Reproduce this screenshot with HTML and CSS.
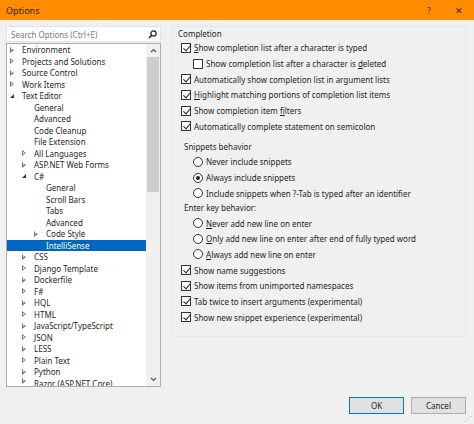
FILE: index.html
```html
<!DOCTYPE html>
<html lang="en">
<head>
    <meta charset="UTF-8">
    <title>Options</title>
    <link rel="stylesheet" href="styles.css">
</head>
<body>
<div class="window">
    <div class="titlebar">
        <span class="title">Options</span>
        <span class="title-btn">?</span>
        <span class="title-btn close">&#x2715;</span>
    </div>
    <div class="main">
        <div class="left">
            <div class="search">
                <span class="search-text">Search Options (Ctrl+E)</span>
                <svg class="search-icon" width="9" height="9" viewBox="0 0 9 9"><circle cx="5.5" cy="3.5" r="2.6" fill="none" stroke="#222" stroke-width="1.2"/><line x1="3.6" y1="5.4" x2="1" y2="8" stroke="#222" stroke-width="1.5"/></svg>
            </div>
            <div class="tree">
                <div class="tree-items">
                    <div class="row lv0"><span class="arr closed"></span>Environment</div>
                    <div class="row lv0"><span class="arr closed"></span>Projects and Solutions</div>
                    <div class="row lv0"><span class="arr closed"></span>Source Control</div>
                    <div class="row lv0"><span class="arr closed"></span>Work Items</div>
                    <div class="row lv0"><span class="arr open"></span>Text Editor</div>
                    <div class="row lv1"><span class="arr"></span>General</div>
                    <div class="row lv1"><span class="arr"></span>Advanced</div>
                    <div class="row lv1"><span class="arr"></span>Code Cleanup</div>
                    <div class="row lv1"><span class="arr"></span>File Extension</div>
                    <div class="row lv1"><span class="arr closed"></span>All Languages</div>
                    <div class="row lv1"><span class="arr closed"></span>ASP.NET Web Forms</div>
                    <div class="row lv1"><span class="arr open"></span>C#</div>
                    <div class="row lv2"><span class="arr"></span>General</div>
                    <div class="row lv2"><span class="arr"></span>Scroll Bars</div>
                    <div class="row lv2"><span class="arr"></span>Tabs</div>
                    <div class="row lv2"><span class="arr"></span>Advanced</div>
                    <div class="row lv2"><span class="arr closed"></span>Code Style</div>
                    <div class="row lv2 selected"><span class="arr"></span>IntelliSense</div>
                    <div class="row lv1"><span class="arr closed"></span>CSS</div>
                    <div class="row lv1"><span class="arr closed"></span>Django Template</div>
                    <div class="row lv1"><span class="arr closed"></span>Dockerfile</div>
                    <div class="row lv1"><span class="arr closed"></span>F#</div>
                    <div class="row lv1"><span class="arr closed"></span>HQL</div>
                    <div class="row lv1"><span class="arr closed"></span>HTML</div>
                    <div class="row lv1"><span class="arr closed"></span>JavaScript/TypeScript</div>
                    <div class="row lv1"><span class="arr closed"></span>JSON</div>
                    <div class="row lv1"><span class="arr closed"></span>LESS</div>
                    <div class="row lv1"><span class="arr closed"></span>Plain Text</div>
                    <div class="row lv1"><span class="arr closed"></span>Python</div>
                    <div class="row lv1 last"><span class="arr closed"></span>Razor (ASP.NET Core)</div>
                </div>
                <div class="scrollbar">
                    <svg class="sb-arrow" width="7" height="5" viewBox="0 0 7 5"><polyline points="1,4 3.5,1.5 6,4" fill="none" stroke="#555" stroke-width="1.2"/></svg>
                    <div class="sb-track"><div class="sb-thumb"></div></div>
                    <svg class="sb-arrow" width="7" height="5" viewBox="0 0 7 5"><polyline points="1,1 3.5,3.5 6,1" fill="none" stroke="#555" stroke-width="1.2"/></svg>
                </div>
            </div>
        </div>
        <div class="right">
            <div class="panel">
                <div class="heading">Completion</div>
                <label class="opt"><span class="cb on"></span><span><u>S</u>how completion list after a character is typed</span></label>
                <label class="opt sub"><span class="cb"></span><span>Show completion list after a character is <u>d</u>eleted</span></label>
                <label class="opt"><span class="cb on"></span><span>Automatically show completion list in argument lists</span></label>
                <label class="opt"><span class="cb on"></span><span><u>H</u>ighlight matching portions of completion list items</span></label>
                <label class="opt"><span class="cb on"></span><span>Show completion item <u>f</u>ilters</span></label>
                <label class="opt"><span class="cb on"></span><span>Automatically complete statement on semicolon</span></label>

                <div class="group-title">Snippets behavior</div>
                <label class="opt radio"><span class="rb"></span><span>Never include snippets</span></label>
                <label class="opt radio"><span class="rb on"></span><span>Always include snippets</span></label>
                <label class="opt radio"><span class="rb"></span><span>Include snippets when ?-Tab is typed after an identifier</span></label>

                <div class="group-title tight">Enter key behavior:</div>
                <label class="opt radio"><span class="rb"></span><span><u>N</u>ever add new line on enter</span></label>
                <label class="opt radio"><span class="rb"></span><span><u>O</u>nly add new line on enter after end of fully typed word</span></label>
                <label class="opt radio"><span class="rb"></span><span><u>A</u>lways add new line on enter</span></label>

                <label class="opt"><span class="cb on"></span><span>Show name su<u>g</u>gestions</span></label>
                <label class="opt"><span class="cb on"></span><span>Show items from unimported namespaces</span></label>
                <label class="opt"><span class="cb on"></span><span>Tab twice to insert arguments (experimental)</span></label>
                <label class="opt"><span class="cb on"></span><span>Show new snippet experience (experimental)</span></label>
            </div>
        </div>
    </div>
    <div class="footer">
        <button class="btn default">OK</button>
        <button class="btn">Cancel</button>
        <span class="grip">&#x22F0;</span>
    </div>
</div>
</body>
</html>
```

FILE: styles.css
```css
*{
    box-sizing: border-box;
}
body{
    margin: 0;
    background-color: #f0f0f0;
    font-family: "Noto Sans", sans-serif;
    font-size: 8px;
    color: #1e1e1e;
}
.window{
    width: 474px;
    height: 424px;
    display: flex;
    flex-direction: column;
    position: relative;
}
.titlebar{
    height: 20px;
    background-color: #ff8c00;
    display: flex;
    align-items: center;
    padding-left: 6px;
    color: #2e1d05;
}
.title{
    flex: 1;
    font-size: 9px;
}
.title-btn{
    width: 30px;
    text-align: center;
    font-size: 8px;
}
.title-btn.close{
    font-size: 9px;
}
.main{
    display: flex;
    padding: 6px 8px 0 6px;
    height: 367px;
}
.left{
    width: 155px;
    display: flex;
    flex-direction: column;
}
.search{
    height: 16px;
    background-color: #fff;
    border: 1px solid #e3e3e3;
    display: flex;
    align-items: center;
    padding: 0 3px 0 4px;
    margin-bottom: 1px;
}
.search-text{
    flex: 1;
    color: #7a7a7a;
}
.tree{
    flex: 1;
    background-color: #fff;
    border: 1px solid #adadad;
    display: flex;
    overflow: hidden;
}
.tree-items{
    flex: 1;
    overflow: hidden;
}
.row{
    height: 11.5px;
    line-height: 11.5px;
    white-space: nowrap;
    display: flex;
    align-items: center;
    color: #262626;
}
.row.last{
    height: 9px;
    align-items: flex-start;
    overflow: hidden;
}
.row.lv0{
    padding-left: 3px;
}
.row.lv1{
    padding-left: 15px;
}
.row.lv2{
    padding-left: 27px;
}
.row.selected{
    background-color: #0067c0;
    color: #fff;
}
.arr{
    width: 9px;
    height: 6px;
    flex: none;
    position: relative;
    margin-right: 3px;
}
.arr.closed::before{
    content: "";
    position: absolute;
    left: 0;
    top: 0;
    border-left: 4px solid #777;
    border-top: 3px solid transparent;
    border-bottom: 3px solid transparent;
}
.arr.closed::after{
    content: "";
    position: absolute;
    left: 1px;
    top: 1.5px;
    border-left: 2px solid #fff;
    border-top: 1.5px solid transparent;
    border-bottom: 1.5px solid transparent;
}
.arr.open::before{
    content: "";
    position: absolute;
    left: 0;
    top: 1px;
    border-right: 4px solid #333;
    border-top: 4px solid transparent;
}
.scrollbar{
    width: 14px;
    background-color: #f0f0f0;
    display: flex;
    flex-direction: column;
    align-items: center;
}
.sb-arrow{
    margin: 4px 0;
    flex: none;
}
.sb-track{
    flex: 1;
    width: 100%;
}
.sb-thumb{
    margin: 0 1px;
    height: 135px;
    background-color: #cdcdcd;
}
.right{
    flex: 1;
    margin-left: 11px;
}
.panel{
    height: 311px;
    border: 1px solid #e6e6e6;
    padding: 0 0 0 5px;
}
.heading{
    height: 13px;
    line-height: 13px;
}
.opt{
    display: flex;
    align-items: center;
    height: 15.7px;
    padding-left: 3px;
    white-space: nowrap;
}
.opt.sub{
    padding-left: 15px;
}
.opt.radio{
    padding-left: 15px;
}
.group-title{
    height: 20px;
    line-height: 25px;
    padding-left: 6px;
}
.group-title.tight{
    height: 14px;
    line-height: 14px;
}
.cb{
    width: 10px;
    height: 10px;
    border: 1px solid #333;
    background-color: #fff;
    margin-right: 3px;
    flex: none;
    position: relative;
}
.cb.on::after{
    content: "";
    position: absolute;
    left: 2.5px;
    top: 0;
    width: 3px;
    height: 5.5px;
    border-right: 1.4px solid #222;
    border-bottom: 1.4px solid #222;
    transform: rotate(40deg);
}
.rb{
    width: 10px;
    height: 10px;
    border: 1px solid #333;
    border-radius: 50%;
    background-color: #fff;
    margin-right: 3px;
    flex: none;
    position: relative;
}
.rb.on::after{
    content: "";
    position: absolute;
    left: 2px;
    top: 2px;
    width: 4px;
    height: 4px;
    border-radius: 50%;
    background-color: #222;
}
.footer{
    flex: 1;
    display: flex;
    justify-content: flex-end;
    align-items: flex-start;
    padding: 10px 8px 0 0;
    gap: 7px;
}
.btn{
    width: 55px;
    height: 17px;
    font-family: "Noto Sans", sans-serif;
    font-size: 8px;
    color: #1e1e1e;
    background-color: #e1e1e1;
    border: 1px solid #adadad;
    padding: 0;
}
.btn.default{
    border: 1px solid #0078d7;
}
.grip{
    position: absolute;
    right: 2px;
    bottom: 1px;
    font-size: 8px;
    color: #aaa;
}
```
